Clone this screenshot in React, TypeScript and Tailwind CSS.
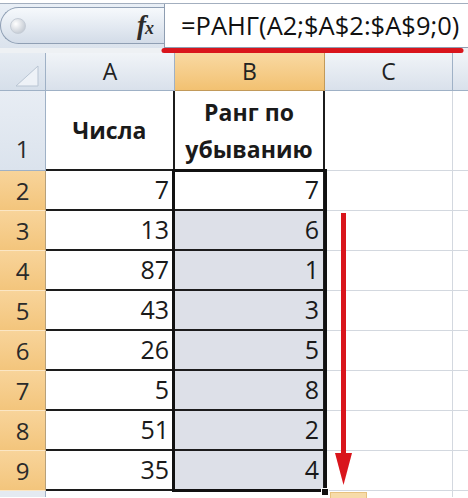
import React from 'react';

const rows = [
  { n: 2, a: 7, b: 7 },
  { n: 3, a: 13, b: 6 },
  { n: 4, a: 87, b: 1 },
  { n: 5, a: 43, b: 3 },
  { n: 6, a: 26, b: 5 },
  { n: 7, a: 5, b: 8 },
  { n: 8, a: 51, b: 2 },
  { n: 9, a: 35, b: 4 },
];

const colHead =
  'flex items-center justify-center border-r border-b border-[#9fb1c6] bg-gradient-to-b from-[#f1f4f8] to-[#d9e1eb] text-[23px] text-[#222]';
const rowHeadOrange =
  'flex items-center justify-center border-r border-[#b7a07a] border-b border-b-[#fbe6c4] bg-gradient-to-b from-[#f8d49a] to-[#f3c57c] text-[24px] text-[#2a2a2a]';
const dataCell = 'flex items-end justify-end pr-[4px] pb-[1px] border-r-2 border-b-2 border-[#1c1c1c] text-[25px] text-[#1a1a1a]';
const lightCell = 'border-r border-b border-[#d3d8df]';

export default function App() {
  return (
    <div className="relative w-[468px] h-[498px] overflow-hidden bg-white font-['Open_Sans',sans-serif]">
      {/* Formula bar */}
      <div className="h-[3px] bg-white" />
      <div className="flex h-[45px] border-t border-[#a3afbf] bg-gradient-to-b from-[#e9eff6] to-[#dbe3ed]">
        <div className="w-[164px] pt-[3px] pb-[4px]">
          <div className="h-full rounded-l-[20px] border border-r-0 border-[#8f9fb4] bg-gradient-to-b from-[#f6f9fc] to-[#d3dce8] flex items-center justify-between pl-[9px] pr-[11px]">
            <div className="w-[16px] h-[16px] rounded-full bg-[radial-gradient(circle_at_35%_35%,#ffffff,#b4bcc7)] border border-[#c5ccd6]" />
            <span className="font-['Liberation_Serif',serif] italic font-bold text-[27px] leading-none text-[#2b2b2b] tracking-[-1px]">
              f<span className="text-[18px]">x</span>
            </span>
          </div>
        </div>
        <div className="flex-1 flex items-center bg-white border-l border-b border-[#8e9db1] pl-[16px] text-[25.5px] text-[#111] whitespace-nowrap">
          =РАНГ(A2;$A$2:$A$9;0)
        </div>
      </div>
      <div className="h-[5px] bg-[#eef1f4]" />

      {/* Sheet */}
      <div className="relative grid grid-cols-[46px_129px_150px_128px_1fr] grid-rows-[38px_80px_repeat(8,40px)_1fr] h-[444px]">
        {/* header row */}
        <div className="relative border-r border-b border-[#9fb1c6] bg-gradient-to-b from-[#e6ecf3] to-[#d6dfea]">
          <svg className="absolute left-[15px] top-[12px]" width="24" height="22" viewBox="0 0 24 22">
            <polygon points="1,21 23,1 23,21" fill="#eef2f7" stroke="#b9c5d3" strokeWidth="1" />
          </svg>
        </div>
        <div className={colHead}>A</div>
        <div className="flex items-center justify-center border-r border-b border-[#c29a5a] bg-gradient-to-b from-[#f9d9a2] to-[#f2c171] text-[23px] text-[#222]">
          B
        </div>
        <div className={colHead}>C</div>
        <div className="border-b border-[#9fb1c6] bg-gradient-to-b from-[#f1f4f8] to-[#d9e1eb]" />

        {/* row 1 */}
        <div className="flex items-end justify-center pb-[3px] border-r border-b border-[#9fb1c6] bg-gradient-to-b from-[#e8edf4] to-[#dbe3ed] text-[24px] text-[#2a2a2a]">
          1
        </div>
        <div className="flex items-center justify-center border-r-2 border-b-2 border-[#1c1c1c] font-bold text-[23px] text-[#1a1a1a]">
          Числа
        </div>
        <div className="flex items-end justify-center pb-[1px] border-r-2 border-b-2 border-[#1c1c1c] font-bold text-[23px] leading-[37px] text-center text-[#1a1a1a]">
          Ранг по
          <br />
          убыванию
        </div>
        <div className={lightCell} />
        <div className="border-b border-[#d3d8df]" />

        {rows.map((r) => (
          <React.Fragment key={r.n}>
            <div className={rowHeadOrange}>{r.n}</div>
            <div className={dataCell}>{r.a}</div>
            <div className={`${dataCell} ${r.n === 2 ? 'bg-white' : 'bg-[#dde0e8]'}`}>{r.b}</div>
            <div className={lightCell} />
            <div className="border-b border-[#d3d8df]" />
          </React.Fragment>
        ))}

        {/* row 10, cut off */}
        <div className="border-r border-[#9fb1c6] bg-[#e4eaf1]" />
        <div />
        <div />
        <div className="border-r border-[#d3d8df]" />
        <div />

        {/* selection outline on B2:B9 */}
        <div className="absolute left-[172px] top-[116px] w-[155px] h-[323px] border-[3px] border-[#111] pointer-events-none" />
        <div className="absolute left-[321px] top-[435px] w-[8px] h-[8px] bg-[#111] border border-white pointer-events-none" />
        <div className="absolute left-[330px] top-[439px] w-[37px] h-[8px] bg-[#f7dba9] border border-[#e8c27f] pointer-events-none" />
      </div>

      {/* red annotations */}
      <svg className="absolute inset-0 pointer-events-none" width="468" height="498" viewBox="0 0 468 498">
        <line x1="164" y1="50.5" x2="461" y2="50.5" stroke="#d9151c" strokeWidth="5" strokeLinecap="round" />
        <line x1="343.5" y1="213" x2="343.5" y2="460" stroke="#d9151c" strokeWidth="5" />
        <polygon points="335,453 352,453 343.5,485" fill="#d9151c" />
      </svg>
    </div>
  );
}
